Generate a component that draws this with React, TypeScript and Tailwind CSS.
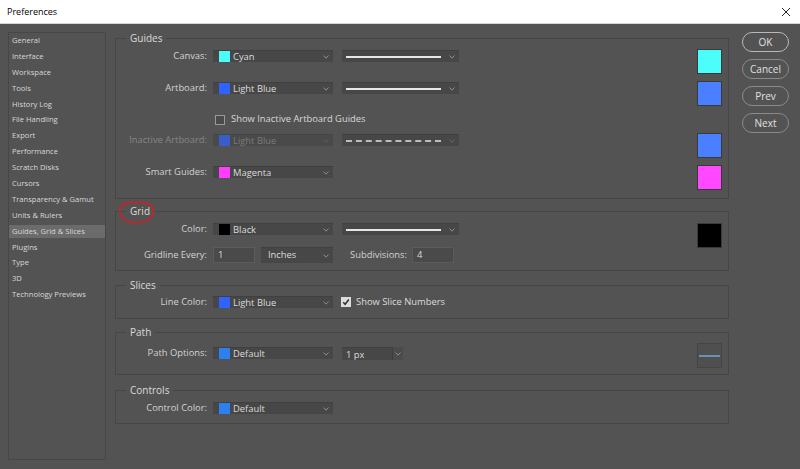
import React from 'react';

const sidebarItems = [
    'General',
    'Interface',
    'Workspace',
    'Tools',
    'History Log',
    'File Handling',
    'Export',
    'Performance',
    'Scratch Disks',
    'Cursors',
    'Transparency & Gamut',
    'Units & Rulers',
    'Guides, Grid & Slices',
    'Plugins',
    'Type',
    '3D',
    'Technology Previews',
];

const Chevron = ({ dim }: { dim?: boolean }) => (
    <svg width="6" height="4" viewBox="0 0 6 4" className="shrink-0">
        <path d="M0.5 0.5 L3 3.2 L5.5 0.5" fill="none" stroke={dim ? '#6a6a6a' : '#8e8e8e'} strokeWidth="1" />
    </svg>
);

interface ColorSelectProps {
    swatch: string;
    name: string;
    disabled?: boolean;
}

const ColorSelect: React.FC<ColorSelectProps> = ({ swatch, name, disabled }) => (
    <div className={`w-[120px] h-[12px] flex items-center pl-[6px] pr-[4px] bg-[#474747] border-t border-[#404040] ${disabled ? 'opacity-70' : ''}`}>
        <span className={`w-[11px] h-[11px] shrink-0 ${swatch}`} />
        <span className={`ml-[3px] flex-1 leading-[12px] ${disabled ? 'text-[#8a8a8a]' : 'text-[#dcdcdc]'}`}>{name}</span>
        <Chevron dim={disabled} />
    </div>
);

const LineSelect = ({ dashed, disabled }: { dashed?: boolean; disabled?: boolean }) => (
    <div className="w-[117px] h-[12px] flex items-center pl-[4px] pr-[4px] bg-[#474747] border-t border-[#404040]">
        {dashed ? (
            <span className="w-[95px] h-0 border-t-2 border-dashed border-[#bdbdbd]" />
        ) : (
            <span className="w-[95px] h-[2px] bg-[#e6e6e6]" />
        )}
        <span className="flex-1" />
        <Chevron dim={disabled} />
    </div>
);

const BigSwatch = ({ color }: { color: string }) => (
    <div className={`w-[25px] h-[25px] shrink-0 border border-[#3a3a3a] ${color}`} />
);

const Label = ({ text, disabled, tall }: { text: string; disabled?: boolean; tall?: boolean }) => (
    <div className={`w-[91px] shrink-0 text-right whitespace-nowrap ${tall ? 'leading-[16px]' : 'leading-[12px]'} ${disabled ? 'text-[#858585]' : 'text-[#d2d2d2]'}`}>
        {text}
    </div>
);

const Legend = ({ text, children }: { text: string; children?: React.ReactNode }) => (
    <legend className="relative ml-[10px] px-[4px] text-[10px] leading-[12px] text-[#dadada]">
        {text}
        {children}
    </legend>
);

const Checkbox = ({ checked }: { checked?: boolean }) =>
    checked ? (
        <span className="w-[10px] h-[10px] shrink-0 bg-[#dcdcdc] flex items-center justify-center">
            <svg width="8" height="8" viewBox="0 0 8 8">
                <path d="M1.2 4.2 L3.2 6.2 L6.8 1.6" fill="none" stroke="#333" strokeWidth="1.6" />
            </svg>
        </span>
    ) : (
        <span className="w-[10px] h-[10px] shrink-0 border border-[#9a9a9a] bg-[#4a4a4a]" />
    );

const PillButton = ({ text, primary }: { text: string; primary?: boolean }) => (
    <button
        className={`w-[47px] h-[20px] rounded-full text-[10px] text-[#e0e0e0] ${primary ? 'border-[1.5px] border-[#b8b8b8]' : 'border border-[#8a8a8a]'}`}
    >
        {text}
    </button>
);

export default function App() {
    return (
        <div className="w-[800px] h-[469px] overflow-hidden flex flex-col bg-[#535353] font-['Open_Sans',sans-serif] text-[9.4px]">
            {/* Title bar */}
            <div className="h-[24px] shrink-0 bg-white border-b border-[#d4d4d4] flex items-center justify-between pl-[7px] pr-[9px]">
                <span className="text-[9px] text-black">Preferences</span>
                <svg width="10" height="10" viewBox="0 0 10 10">
                    <path d="M1 1 L9 9 M9 1 L1 9" stroke="#222" strokeWidth="1" />
                </svg>
            </div>

            <div className="flex flex-1 pt-[8px]">
                {/* Sidebar */}
                <div className="ml-[8px] w-[98px] h-[428px] shrink-0 border border-[#474747] flex flex-col pt-px">
                    {sidebarItems.map(item => (
                        <div
                            key={item}
                            className={`h-[13px] mb-[2.9px] pl-[3px] text-[7.6px] leading-[13px] whitespace-nowrap text-[#d8d8d8] ${item === 'Guides, Grid & Slices' ? 'bg-[#6b6b6b]' : ''}`}
                        >
                            {item}
                        </div>
                    ))}
                </div>

                {/* Main */}
                <div className="ml-[9px] w-[614px] shrink-0 flex flex-col">
                    {/* Guides */}
                    <fieldset className="border border-[#464646] pt-[5px] pb-[8px] pr-[6px] flex flex-col gap-[7px]">
                        <Legend text="Guides" />
                        <div className="flex items-start">
                            <div className="mt-px"><Label text="Canvas:" /></div>
                            <div className="ml-[6px] mt-px"><ColorSelect swatch="bg-[#4dfcfa]" name="Cyan" /></div>
                            <div className="ml-[9px] mt-px"><LineSelect /></div>
                            <div className="ml-auto"><BigSwatch color="bg-[#4bfdfb]" /></div>
                        </div>
                        <div className="flex items-start">
                            <div className="mt-px"><Label text="Artboard:" /></div>
                            <div className="ml-[6px] mt-px"><ColorSelect swatch="bg-[#2f62ff]" name="Light Blue" /></div>
                            <div className="ml-[9px] mt-px"><LineSelect /></div>
                            <div className="ml-auto"><BigSwatch color="bg-[#4a80ff]" /></div>
                        </div>
                        <div className="h-[13px] flex items-center pl-[99px]">
                            <Checkbox />
                            <span className="ml-[6px] text-[#d8d8d8] whitespace-nowrap">Show Inactive Artboard Guides</span>
                        </div>
                        <div className="flex items-start">
                            <div className="mt-px"><Label text="Inactive Artboard:" disabled /></div>
                            <div className="ml-[6px] mt-px"><ColorSelect swatch="bg-[#2f62ff]" name="Light Blue" disabled /></div>
                            <div className="ml-[9px] mt-px"><LineSelect dashed disabled /></div>
                            <div className="ml-auto"><BigSwatch color="bg-[#4a80ff]" /></div>
                        </div>
                        <div className="flex items-start">
                            <div className="mt-px"><Label text="Smart Guides:" /></div>
                            <div className="ml-[6px] mt-px"><ColorSelect swatch="bg-[#ff3cff]" name="Magenta" /></div>
                            <div className="ml-auto"><BigSwatch color="bg-[#ff48ff]" /></div>
                        </div>
                    </fieldset>

                    {/* Grid */}
                    <fieldset className="mt-[6px] border border-[#464646] pt-[6px] pb-[7px] pr-[6px] flex items-start">
                        <Legend text="Grid">
                            <svg width="38" height="25" viewBox="0 0 38 25" className="absolute -left-[8px] -top-[5px] pointer-events-none">
                                <path
                                    d="M13 2.5 C6 2, 1.5 6, 2 12 C2.5 19, 10 23.5, 21 22.5 C30 21.5, 36 17, 35.5 10.5 C35 5, 29 2.5, 22 2.2 C18 2, 12 2.4, 5 4.5"
                                    fill="none"
                                    stroke="#c8232b"
                                    strokeWidth="1.6"
                                    strokeLinecap="round"
                                />
                            </svg>
                        </Legend>
                        <div className="flex-1 flex flex-col gap-[12px]">
                            <div className="flex items-start">
                                <Label text="Color:" />
                                <div className="ml-[6px]"><ColorSelect swatch="bg-black" name="Black" /></div>
                                <div className="ml-[9px]"><LineSelect /></div>
                            </div>
                            <div className="flex items-start">
                                <Label text="Gridline Every:" tall />
                                <div className="ml-[6px] w-[42px] h-[16px] bg-[#4a4a4a] border border-[#5b5b5b] pl-[4px] leading-[14px] text-[#dcdcdc]">1</div>
                                <div className="ml-[6px] w-[72px] h-[16px] bg-[#474747] border-t border-[#404040] flex items-center pl-[7px] pr-[4px]">
                                    <span className="flex-1 text-[#dcdcdc]">Inches</span>
                                    <Chevron />
                                </div>
                                <div className="ml-[9px] w-[65px] text-right leading-[16px] text-[#d2d2d2]">Subdivisions:</div>
                                <div className="ml-[5px] w-[42px] h-[16px] bg-[#4a4a4a] border border-[#5b5b5b] pl-[4px] leading-[14px] text-[#dcdcdc]">4</div>
                            </div>
                        </div>
                        <BigSwatch color="bg-black" />
                    </fieldset>

                    {/* Slices */}
                    <fieldset className="mt-[8px] border border-[#464646] pt-[5px] pb-[10px] pr-[6px]">
                        <Legend text="Slices" />
                        <div className="flex items-center">
                            <Label text="Line Color:" />
                            <div className="ml-[6px]"><ColorSelect swatch="bg-[#2f62ff]" name="Light Blue" /></div>
                            <div className="ml-[8px]"><Checkbox checked /></div>
                            <span className="ml-[5px] text-[#dcdcdc] leading-[12px] whitespace-nowrap">Show Slice Numbers</span>
                        </div>
                    </fieldset>

                    {/* Path */}
                    <fieldset className="mt-[7px] border border-[#464646] pt-[5px] pb-[6px] pr-[6px] flex items-start">
                        <Legend text="Path" />
                        <div className="flex-1 flex items-start mt-[4px]">
                            <Label text="Path Options:" />
                            <div className="ml-[6px]"><ColorSelect swatch="bg-[#2d80f0]" name="Default" /></div>
                            <div className="ml-[9px] w-[61px] h-[13px] flex">
                                <div className="w-[50px] bg-[#474747] border-t border-[#404040] pl-[4px] leading-[13px] text-[#dcdcdc]">1 px</div>
                                <div className="flex-1 bg-[#4b4b4b] border-l border-[#3e3e3e] flex items-center justify-center">
                                    <Chevron />
                                </div>
                            </div>
                        </div>
                        <div className="w-[25px] h-[25px] shrink-0 border border-[#454545] bg-[#4f4f4f] flex items-center justify-center">
                            <span className="w-[21px] h-[2px] bg-[#6b8fb8]" />
                        </div>
                    </fieldset>

                    {/* Controls */}
                    <fieldset className="mt-[9px] border border-[#464646] pt-[6px] pb-[9px] pr-[6px]">
                        <Legend text="Controls" />
                        <div className="flex items-start">
                            <Label text="Control Color:" />
                            <div className="ml-[6px]"><ColorSelect swatch="bg-[#2d80f0]" name="Default" /></div>
                        </div>
                    </fieldset>
                </div>

                {/* Buttons */}
                <div className="ml-[13px] w-[47px] shrink-0 flex flex-col gap-[7px]">
                    <PillButton text="OK" primary />
                    <PillButton text="Cancel" />
                    <PillButton text="Prev" />
                    <PillButton text="Next" />
                </div>
            </div>
        </div>
    );
}
